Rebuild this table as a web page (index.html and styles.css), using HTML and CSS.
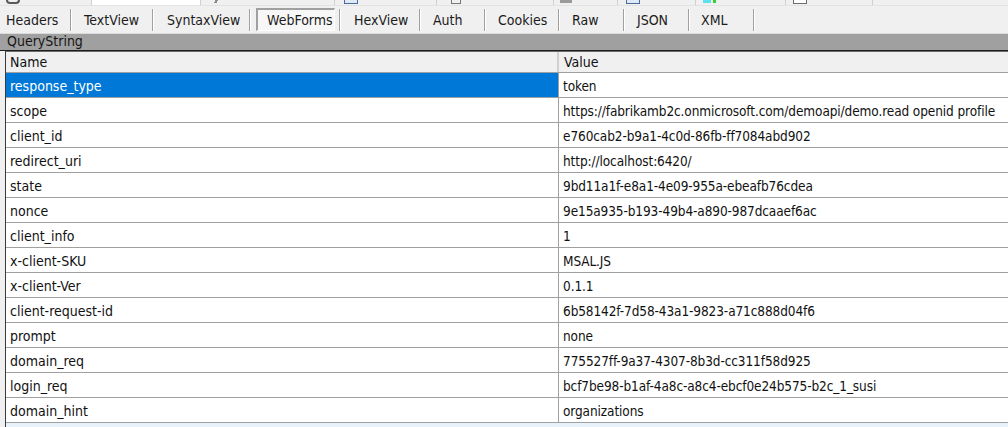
FILE: index.html
```html
<!DOCTYPE html>
<html>
<head>
<meta charset="utf-8">
<link rel="stylesheet" href="styles.css">
</head>
<body>
<div class="app">
  <div class="toptabs">
    <div class="seg seg-a"><span class="ico ico-dark"></span></div>
    <div class="seg seg-b seg-white"></div>
    <div class="seg seg-c"><span class="ico ico-slash"></span></div>
    <div class="seg seg-d"><span class="ico ico-box-blue"></span></div>
    <div class="seg seg-e"><span class="ico ico-small"></span></div>
    <div class="seg seg-f"><span class="ico ico-gray"></span></div>
    <div class="seg seg-g"><span class="ico ico-box-blue"></span></div>
    <div class="seg seg-h"><span class="ico ico-cyan"></span><span class="ico ico-green"></span></div>
    <div class="seg seg-i"><span class="ico ico-box"></span></div>
    <div class="seg seg-j"></div>
  </div>
  <div class="tabs">
    <div class="tab tab-headers">Headers</div><span class="sep"></span>
    <div class="tab tab-textview">TextView</div><span class="sep"></span>
    <div class="tab tab-syntax">SyntaxView</div><span class="sep"></span>
    <div class="tab tab-webforms"><span class="tab-active">WebForms</span></div><span class="sep"></span>
    <div class="tab tab-hex">HexView</div><span class="sep"></span>
    <div class="tab tab-auth">Auth</div><span class="sep"></span>
    <div class="tab tab-cookies">Cookies</div><span class="sep"></span>
    <div class="tab tab-raw">Raw</div><span class="sep"></span>
    <div class="tab tab-json">JSON</div><span class="sep"></span>
    <div class="tab tab-xml">XML</div><span class="sep"></span>
  </div>
  <div class="panel">
    <div class="panel-title">QueryString</div>
    <div class="grid">
      <div class="grid-head">
        <div class="cell cell-name">Name</div>
        <div class="cell cell-value">Value</div>
      </div>
      <div class="row selected"><div class="cell cell-name">response_type</div><div class="cell cell-value">token</div></div>
      <div class="row"><div class="cell cell-name">scope</div><div class="cell cell-value">https://fabrikamb2c.onmicrosoft.com/demoapi/demo.read openid profile</div></div>
      <div class="row"><div class="cell cell-name">client_id</div><div class="cell cell-value">e760cab2-b9a1-4c0d-86fb-ff7084abd902</div></div>
      <div class="row"><div class="cell cell-name">redirect_uri</div><div class="cell cell-value">http://localhost:6420/</div></div>
      <div class="row"><div class="cell cell-name">state</div><div class="cell cell-value">9bd11a1f-e8a1-4e09-955a-ebeafb76cdea</div></div>
      <div class="row"><div class="cell cell-name">nonce</div><div class="cell cell-value">9e15a935-b193-49b4-a890-987dcaaef6ac</div></div>
      <div class="row"><div class="cell cell-name">client_info</div><div class="cell cell-value">1</div></div>
      <div class="row"><div class="cell cell-name">x-client-SKU</div><div class="cell cell-value">MSAL.JS</div></div>
      <div class="row"><div class="cell cell-name">x-client-Ver</div><div class="cell cell-value">0.1.1</div></div>
      <div class="row"><div class="cell cell-name">client-request-id</div><div class="cell cell-value">6b58142f-7d58-43a1-9823-a71c888d04f6</div></div>
      <div class="row"><div class="cell cell-name">prompt</div><div class="cell cell-value">none</div></div>
      <div class="row"><div class="cell cell-name">domain_req</div><div class="cell cell-value">775527ff-9a37-4307-8b3d-cc311f58d925</div></div>
      <div class="row"><div class="cell cell-name">login_req</div><div class="cell cell-value">bcf7be98-b1af-4a8c-a8c4-ebcf0e24b575-b2c_1_susi</div></div>
      <div class="row"><div class="cell cell-name">domain_hint</div><div class="cell cell-value">organizations</div></div>
      <div class="grid-foot"></div>
    </div>
  </div>
</div>
</body>
</html>
```

FILE: styles.css
```css
* { box-sizing: border-box; }
html, body { margin: 0; padding: 0; }
body {
  width: 1008px;
  height: 427px;
  overflow: hidden;
  background: #f0f0f0;
  font-family: "DejaVu Sans Condensed", "DejaVu Sans", sans-serif;
  font-stretch: semi-condensed;
  font-size: 14px;
  color: #000;
}
.app { display: flex; flex-direction: column; height: 427px; }

/* top partially visible tab strip */
.toptabs {
  display: flex;
  height: 6px;
  background: #f0f0f0;
  border-bottom: 1px solid #e2e2e2;
}
.seg {
  position: relative;
  height: 5px;
  border-right: 1px solid #cfcfcf;
  display: flex;
  align-items: flex-end;
  padding-left: 9px;
  gap: 2px;
}
.seg-white { background: #fff; }
.seg-a { width: 92px; padding-left: 6px; }
.seg-b { width: 109px; }
.seg-c { width: 134px; }
.seg-d { width: 102px; }
.seg-e { width: 117px; padding-left: 14px; }
.seg-f { width: 64px; padding-left: 6px; }
.seg-g { width: 78px; padding-left: 8px; }
.seg-h { width: 90px; padding-left: 7px; }
.seg-i { width: 87px; padding-left: 7px; }
.seg-j { flex: 1; border-right: none; }
.ico { display: block; height: 4px; align-self: flex-start; }
.ico-dark { width: 14px; border: 2px solid #5a5a5a; border-top: none; border-radius: 0 0 6px 6px; }
.ico-slash { width: 12px; height: 3px; background: linear-gradient(120deg, transparent 40%, #8a8a8a 40%, #8a8a8a 60%, transparent 60%); }
.ico-box-blue { width: 14px; border: 1px solid #4a6aa0; border-top: none; background: #dfe8f5; }
.ico-small { width: 10px; border: 1px solid #777; border-top: none; }
.ico-gray { width: 12px; background: #9a9a9a; height: 3px; }
.ico-cyan { width: 8px; background: #5ee0f0; height: 3px; }
.ico-green { width: 3px; background: #36d030; height: 3px; }
.ico-box { width: 14px; border: 1px solid #6b6b6b; border-top: none; background: #fff; }

/* inspector tabs */
.tabs {
  display: flex;
  align-items: center;
  height: 28px;
  background: #f0f0f0;
  border-bottom: 1px solid #dadada;
}
.tab {
  height: 23px;
  display: flex;
  align-items: center;
  padding-left: 12px;
  color: #1b1b1b;
  white-space: nowrap;
}
.tab-headers { width: 70px; padding-left: 6px; }
.tab-textview { width: 80px; }
.tab-syntax { width: 95px; padding-left: 13px; }
.tab-webforms { width: 88px; padding-left: 5px; }
.tab-hex { width: 78px; padding-left: 13px; }
.tab-auth { width: 63px; padding-left: 12px; }
.tab-cookies { width: 72px; padding-left: 12px; }
.tab-raw { width: 63px; padding-left: 12px; }
.tab-json { width: 63px; padding-left: 12px; }
.tab-xml { width: 63px; padding-left: 11px; }
.tab-active {
  display: flex;
  align-items: center;
  height: 23px;
  width: 79px;
  padding-left: 9px;
  background: #f7f7f7;
  border-top: 2px solid #a0a0a0;
  border-left: 2px solid #a0a0a0;
  border-bottom: 1px solid #fff;
  border-right: 1px solid #fff;
}
.sep {
  width: 2px;
  height: 22px;
  border-left: 1px solid #a0a0a0;
  border-right: 1px solid #fff;
}

/* panel */
.panel { flex: 1; display: flex; flex-direction: column; min-height: 0; }
.panel-title {
  height: 17px;
  line-height: 15px;
  padding-left: 7px;
  background: #a0a0a0;
  color: #161616;
  border-bottom: 1px solid #1e1e1e;
  overflow: hidden;
}
.grid {
  flex: 1;
  margin-left: 5px;
  border-left: 1px solid #3a3a3a;
  border-top: 1px solid #6a6a6a;
  background: #fff;
  display: flex;
  flex-direction: column;
}
.grid-head {
  display: flex;
  height: 21px;
  background: #f0f0f0;
  border-bottom: 1px solid #a0a0a0;
}
.grid-head .cell { line-height: 21px; }
.grid-head .cell-name { border-right: 2px solid #d0d0d0; }
.row {
  display: flex;
  height: 25px;
  border-bottom: 1px solid #a0a0a0;
  background: #fff;
}
.cell {
  line-height: 26px;
  padding-left: 4px;
  white-space: nowrap;
  overflow: hidden;
  color: #111;
}
.cell-name { width: 553px; border-right: 1px solid #a0a0a0; }
.cell-value { flex: 1; }
.row .cell-value { font-size: 13.5px; letter-spacing: -0.1px; }
.grid-head .cell-value { padding-left: 5px; }
.row.selected .cell-name { background: #0078d7; color: #fff; }
.grid-foot { flex: 1; background: #e8f2fb; }
```
